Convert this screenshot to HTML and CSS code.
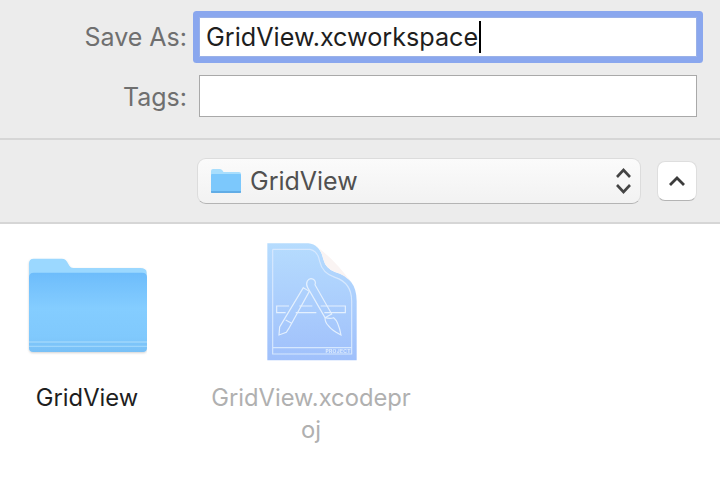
FILE: index.html
```html
<!DOCTYPE html>
<html lang="en">
<head>
    <meta charset="UTF-8">
    <meta name="viewport" content="width=device-width, initial-scale=1.0">
    <title>Save As</title>
    <link rel="stylesheet" href="styles.css">
</head>
<body>
    <div class="save-form">
        <label class="form-label">Save As:</label>
        <div class="text-field focused">GridView.xcworkspace<span class="caret"></span></div>
        <label class="form-label tags-label">Tags:</label>
        <div class="text-field"></div>
    </div>

    <div class="location-bar">
        <div class="location-select">
            <svg class="mini-folder" viewBox="0 0 30 24">
                <path d="M0 2q0-2 2-2h7q1.500 0 2.500 1.500l1 1.500h15.500q2 0 2 2v6H0z" fill="#a8defd"/>
                <path d="M0 6q0-1 1-1h28q1 0 1 1v17q0 1-1 1H1q-1 0-1-1z" fill="#7cc8fc"/>
                <path d="M0 23q0 1 1 1h28q1 0 1-1v-1H0z" fill="#62ade6"/>
            </svg>
            <span class="location-name">GridView</span>
            <svg class="stepper" viewBox="0 0 18 30">
                <path d="M3 11l6.500-7 6.500 7M3 19l6.500 7 6.500-7" fill="none" stroke="#444" stroke-width="2.600"/>
            </svg>
        </div>
        <button class="up-button" type="button">
            <svg viewBox="0 0 18 12" width="18" height="12">
                <path d="M2 10l7-7 7 7" fill="none" stroke="#3c3c3c" stroke-width="2.800"/>
            </svg>
        </button>
    </div>

    <div class="file-list">
        <div class="file-item folder-item">
            <svg class="file-icon" viewBox="51 0 360 390" width="120" height="130">
                <defs>
                    <linearGradient id="folderFront" x1="0" y1="0" x2="0" y2="1">
                        <stop offset="0" stop-color="#6dbcfb"/>
                        <stop offset="0.450" stop-color="#84cdff"/>
                        <stop offset="0.800" stop-color="#80c9fd"/>
                        <stop offset="1" stop-color="#78c0f6"/>
                    </linearGradient>
                    <filter id="folderShadow" x="-10%" y="-10%" width="120%" height="120%">
                        <feDropShadow dx="0" dy="3" stdDeviation="3" flood-color="#000" flood-opacity="0.180"/>
                    </filter>
                </defs>
                <g filter="url(#folderShadow)">
                    <path d="M57 82q0-14 14-14h85q10 0 15 9l7 12q4 7 12 7h200q20 0 20 14v30H57z" fill="#9bd8ff"/>
                    <path d="M57 124q0-14 14-14h326q14 0 14 14v212q0 12-12 12H69q-12 0-12-12z" fill="url(#folderFront)"/>
                </g>
                <path d="M57 318h354M57 331h354" stroke="#9ed6fc" stroke-width="4"/>
            </svg>
            <div class="file-name">GridView</div>
        </div>
        <div class="file-item project-item">
            <svg class="file-icon" viewBox="-6 0 348 390" width="116" height="130">
                <defs>
                    <linearGradient id="pageFill" x1="0" y1="0" x2="0" y2="1">
                        <stop offset="0" stop-color="#b6dcfe"/>
                        <stop offset="1" stop-color="#a0c0fb"/>
                    </linearGradient>
                </defs>
                <path d="M37 22H160Q195 25 205 70 212 98 240 108 305 125 305 195V373H37z" fill="url(#pageFill)"/>
                <path d="M178 26Q198 34 205 70 212 98 240 108 272 116 292 144 240 70 178 26z" fill="#faf4f3"/>
                <path d="M53 40H165Q188 44 194 76 202 112 240 124 290 140 290 195V354H53V40M53 335H290" fill="none" stroke="#d6e8fe" stroke-width="3.500"/>
                <g fill="none" stroke="#e4f0fe" stroke-width="3.500">
                    <path d="M102 210H65V230H92M133 210H172M122 230H184M197 210H271V230H208"/>
                    <path d="M145 155l18 11-62 112-7 11-22 8 2-24 6-10zM92 252l18 10"/>
                    <path d="M157 135q7-11 18-5 9 6 5 16l50 88-20 11-52-90q-6-10-1-20zM210 245q16 4 26 0 14 10 22 52-28-14-38-28-10-10-10-24z"/>
                </g>
                <text class="project-tag" x="288" y="350" text-anchor="end">PROJECT</text>
            </svg>
            <div class="file-name dimmed">GridView.xcodeproj</div>
        </div>
    </div>
</body>
</html>
```

FILE: styles.css
```css
:root {
    --panel-color: #ececec;
    --line-color: #d6d6d6;
    --ring-color: #8aa7ee;
    --field-border: #a9a9a9;
    --label-color: #6f6f6f;
    --text-color: #1e1e1e;
}

* {
    box-sizing: border-box;
}

html, body {
    height: 100%;
}

body {
    margin: 0;
    background-color: white;
    color: var(--text-color);
    font-family: Inter, 'Noto Sans', sans-serif;
    overflow: hidden;
}

.save-form {
    display: grid;
    grid-template-columns: 187px 498px;
    column-gap: 12px;
    row-gap: 18px;
    align-items: center;
    height: 140px;
    padding-top: 17px;
    align-content: start;
    background-color: var(--panel-color);
    border-bottom: 2px solid var(--line-color);
}

.form-label {
    text-align: right;
    font-size: 25px;
    color: var(--label-color);
}

.tags-label {
    padding-top: 2px;
}

.text-field {
    display: flex;
    align-items: center;
    height: 42px;
    padding-left: 6px;
    background-color: white;
    border: 1px solid var(--field-border);
    font-size: 25.2px;
    white-space: nowrap;
}

.text-field.focused {
    height: 40px;
    border-color: #9ab1e8;
    border-radius: 1px;
    box-shadow: 0 0 0 6px var(--ring-color);
}

.caret {
    width: 2px;
    height: 32px;
    margin-left: 1px;
    background-color: black;
}

.location-bar {
    display: flex;
    align-items: center;
    height: 84px;
    padding-left: 197px;
    background-color: var(--panel-color);
    border-bottom: 2px solid var(--line-color);
}

.location-select {
    display: flex;
    align-items: center;
    width: 444px;
    height: 46px;
    padding: 0 8px 0 13px;
    background: linear-gradient(#fbfbfb, #f2f2f2);
    border: 1px solid #dcdcdc;
    border-bottom-color: #b4b4b4;
    border-radius: 9px;
}

.mini-folder {
    width: 30px;
    height: 24px;
    flex: none;
}

.location-name {
    flex: 1;
    margin-left: 9px;
    font-size: 25px;
    color: #505050;
}

.stepper {
    width: 18px;
    height: 30px;
}

.up-button {
    display: flex;
    align-items: center;
    justify-content: center;
    width: 40px;
    height: 40px;
    margin-left: 16px;
    padding: 0;
    background-color: white;
    border: 1px solid #dedede;
    border-bottom-color: #b4b4b4;
    border-radius: 8px;
}

.file-list {
    display: grid;
    grid-template-columns: 174px 204px;
    column-gap: 35px;
    padding-top: 12px;
}

.file-item {
    display: flex;
    flex-direction: column;
    align-items: center;
}

.file-icon {
    display: block;
    filter: blur(0.4px);
}

.file-name {
    width: 100%;
    margin-top: 16px;
    text-align: center;
    font-size: 23.75px;
    line-height: 32px;
    word-break: break-all;
}

.file-name.dimmed {
    color: #b0b0b0;
}

.project-tag {
    font-family: Inter, sans-serif;
    font-size: 15px;
    font-weight: 600;
    letter-spacing: 1px;
    fill: #e2effe;
}
```
